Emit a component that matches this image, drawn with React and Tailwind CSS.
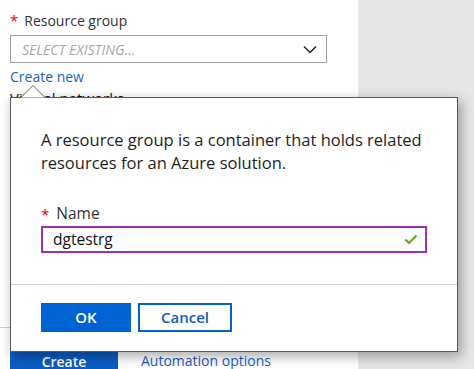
import React from "react";

export default function App() {
  const font = { fontFamily: '"Open Sans", "Noto Sans", sans-serif' };
  return (
    <div className="relative w-[474px] h-[369px] overflow-hidden bg-[#e6e6e6]" style={font}>
      <div className="flex h-full">
        <div className="w-[358px] h-full bg-white flex flex-col">
          <div className="pl-[10px] pt-[10px] flex flex-col">
            <div className="flex items-center h-[20px] text-[14px] text-[#333]">
              <span className="text-[#e00] mr-[6px] text-[15px]">*</span>
              <span>Resource group</span>
            </div>
            <div className="mt-[5px] w-[317px] h-[28px] border border-[#a0a0a0] flex items-center justify-between pl-[11px] pr-[9px]">
              <span className="italic text-[14px] text-[#a6a6a6]">SELECT EXISTING...</span>
              <svg width="14" height="9" viewBox="0 0 14 9"><path d="M1 1.5 L7 7.5 L13 1.5" fill="none" stroke="#222" strokeWidth="1.5" /></svg>
            </div>
            <div className="mt-[4px] text-[14px] text-[#1a5fc8] leading-[20px]">Create new</div>
            <div className="text-[15px] text-[#111] leading-[20px] mt-[1px]">Virtual networks</div>
          </div>
          <div className="mt-auto border-t border-[#d0d0d0] h-[42px] flex items-end gap-[23px] pl-[10px]">
            <div className="w-[108px] h-[17px] bg-[#0b5cc4] flex items-start justify-center text-white text-[14px] leading-[20px] font-semibold">Create</div>
            <div className="text-[#1a5fc8] text-[14px] leading-[17px] h-[17px]">Automation options</div>
          </div>
        </div>
        <div className="flex-1" />
      </div>

      <div className="absolute left-[10px] top-[97px] w-[448px] h-[255px] bg-white border border-[#5a5a5a] shadow-[3px_4px_12px_rgba(0,0,0,0.35)] flex flex-col">
        <div className="px-[30px] pt-[30px] flex-1">
          <p className="text-[16.5px] leading-[23px] text-[#1e1e1e]">A resource group is a container that holds related resources for an Azure solution.</p>
          <div className="mt-[30px] flex items-center h-[20px] text-[15.5px] text-[#333]">
            <span className="text-[#e00] mr-[7px] text-[15px]">*</span>
            <span>Name</span>
          </div>
          <div className="mt-[2px] w-[386px] h-[27px] border-2 border-[#9b2fb8] flex items-center justify-between pl-[10px] pr-[7px]">
            <span className="text-[15.5px] text-[#111]">dgtestrg</span>
            <svg width="14" height="11" viewBox="0 0 14 11"><path d="M1.5 5.5 L5 9 L12.5 1.5" fill="none" stroke="#6aa624" strokeWidth="2.2" /></svg>
          </div>
        </div>
        <div className="border-t border-[#d4d4d4] h-[67px] flex items-start gap-[7px] pl-[30px] pt-[18px]">
          <div className="w-[90px] h-[29px] bg-[#0063d3] text-white text-[15px] font-semibold flex items-center justify-center">OK</div>
          <div className="w-[94px] h-[29px] border-2 border-[#0063d3] text-[#0f5cbf] text-[15px] font-semibold flex items-center justify-center">Cancel</div>
        </div>
      </div>
      <svg className="absolute left-[20px] top-[84px]" width="28" height="14" viewBox="0 0 28 14">
        <path d="M1 13.5 L13 1.5 L25 13.5 Z" fill="white" />
        <path d="M1 13.5 L13 1.5 L25 13.5" fill="none" stroke="#5a5a5a" strokeWidth="1" />
      </svg>
    </div>
  );
}
